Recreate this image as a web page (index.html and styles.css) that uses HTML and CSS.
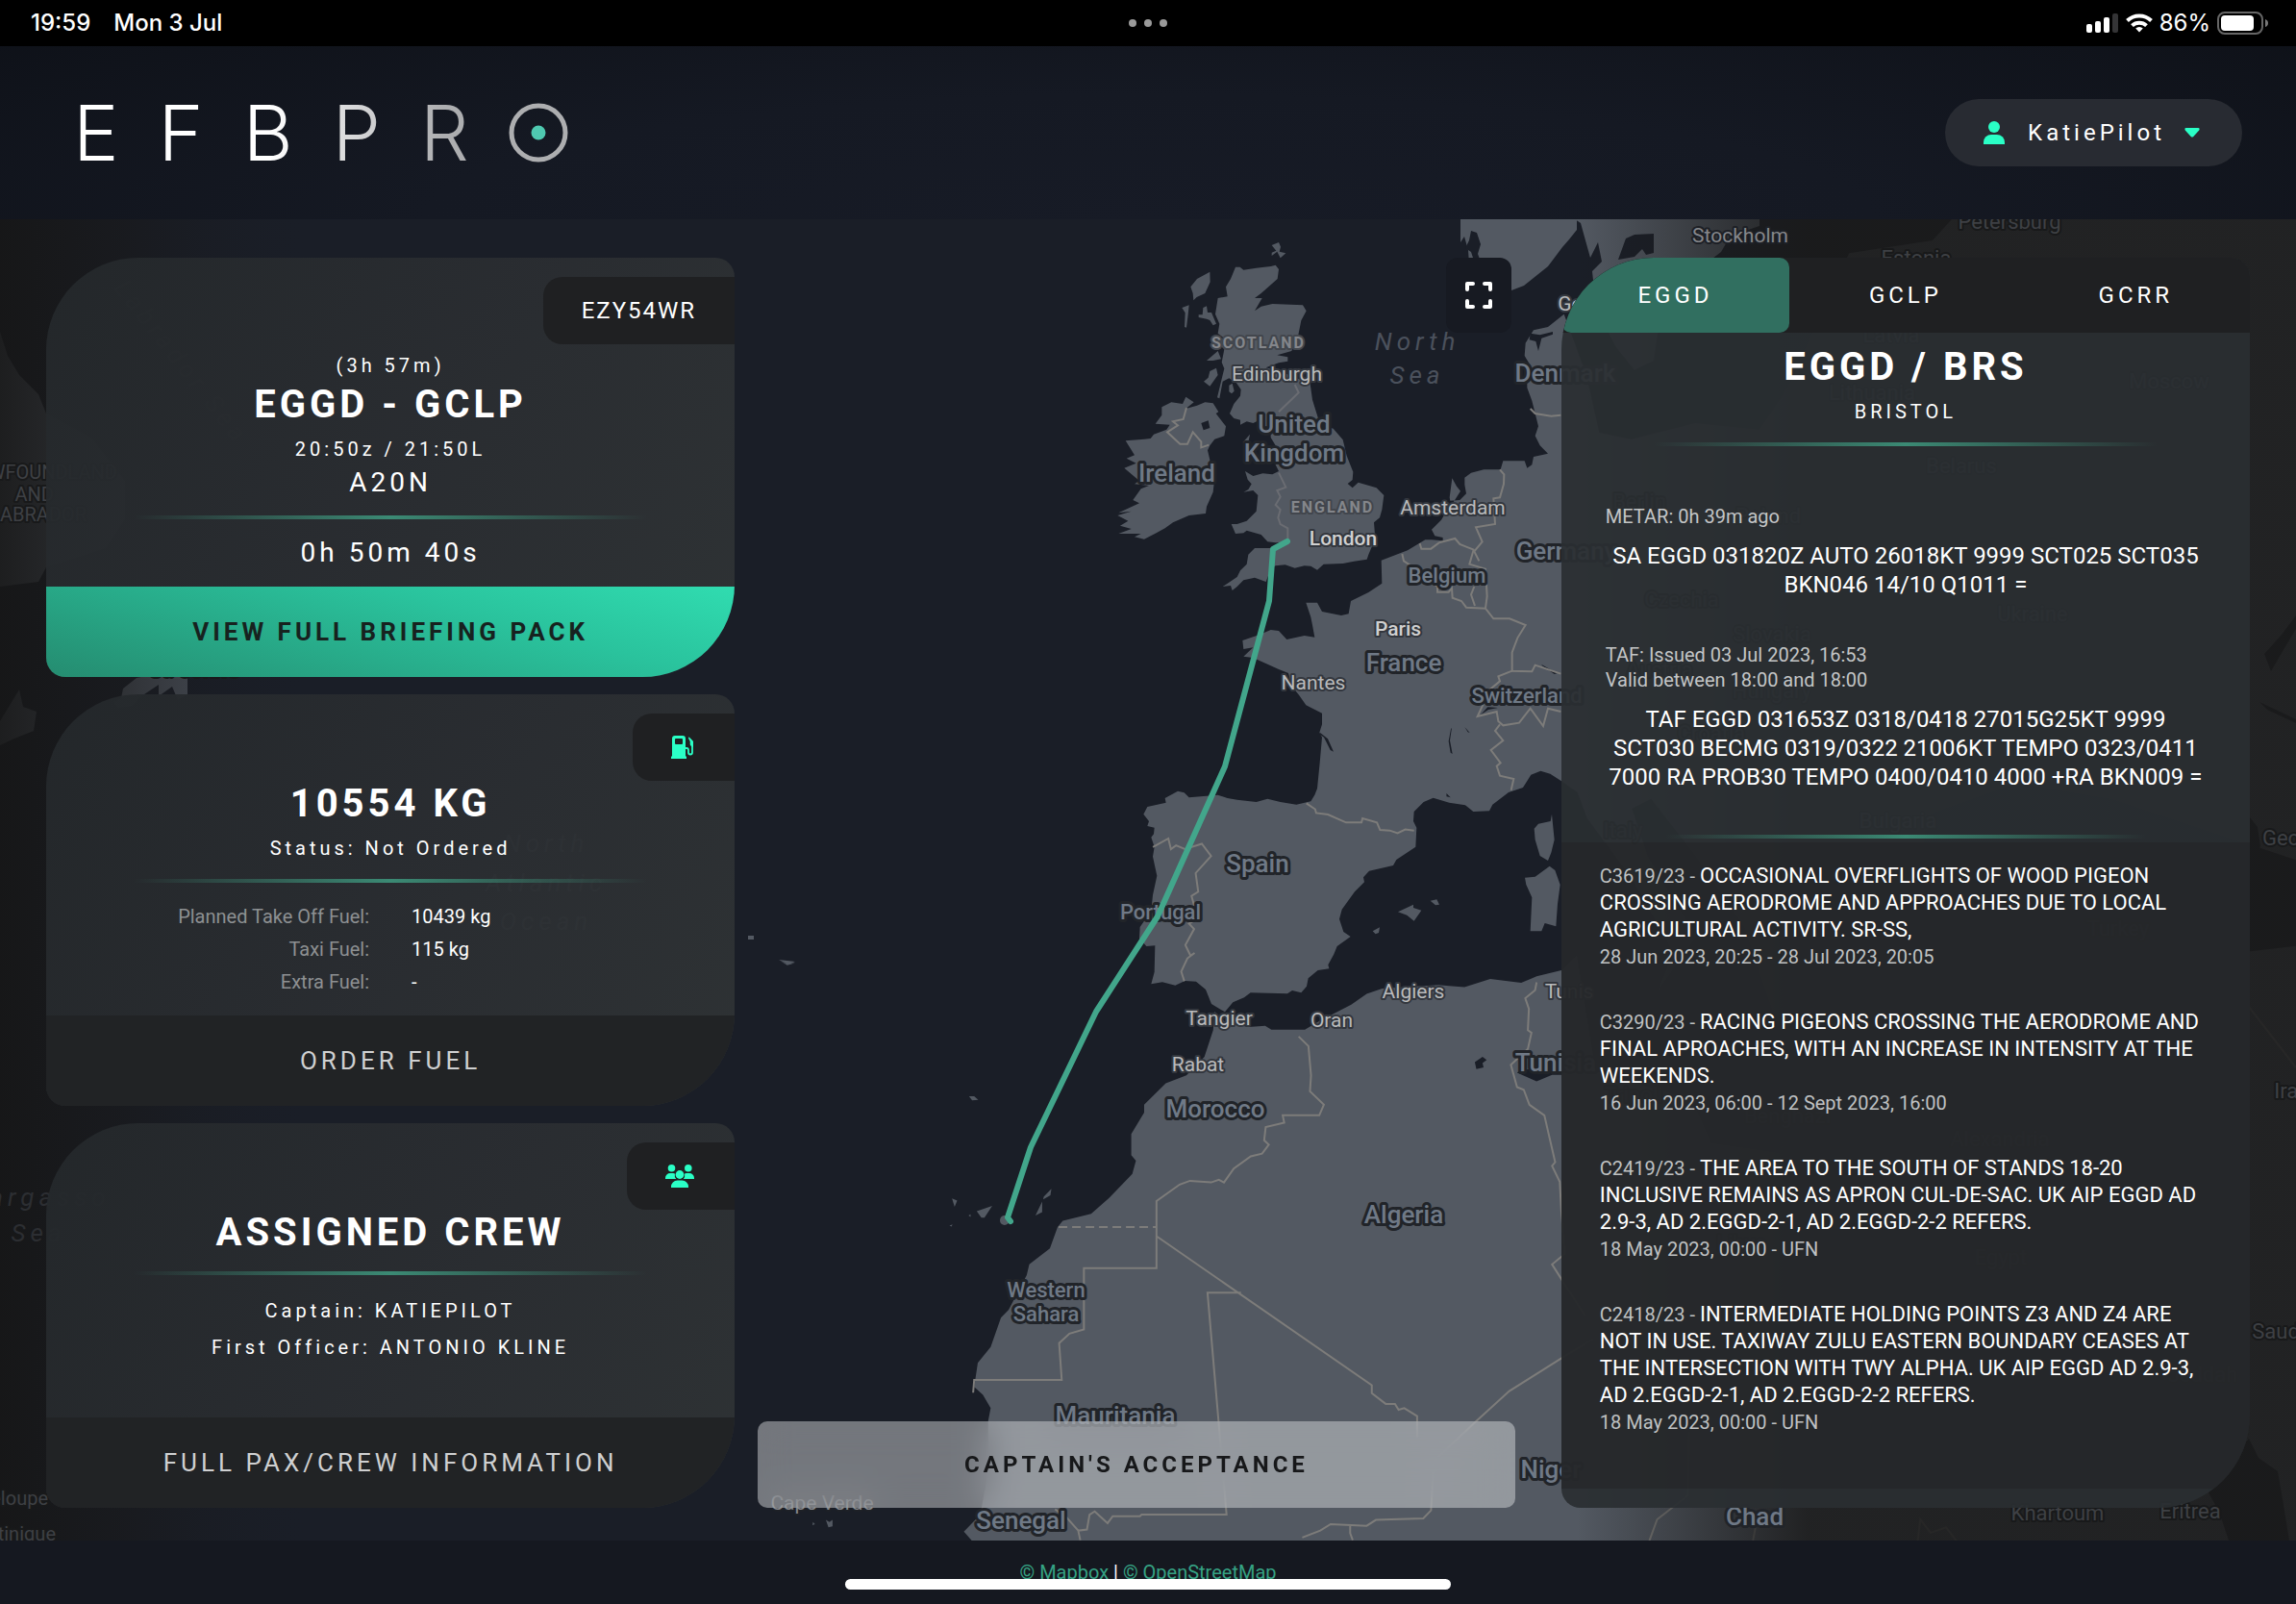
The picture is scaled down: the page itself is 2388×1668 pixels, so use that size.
FILE: index.html
```html
<!DOCTYPE html>
<html lang="en">
<head>
  <meta charset="UTF-8">
  <meta name="viewport" content="width=device-width, initial-scale=1">
  <title>EFBPRO</title>
  <link rel="stylesheet" href="styles.css">
</head>
<body>
  <div class="statusbar">
    <div class="status-left"><span>19:59</span><span>Mon 3 Jul</span></div>
    <div class="status-dots"><i></i><i></i><i></i></div>
    <div class="status-right">
      <svg width="34" height="22" viewBox="0 0 34 22" fill="#fff">
        <rect x="0" y="12" width="6" height="9" rx="2"/><rect x="9" y="9" width="6" height="12" rx="2"/>
        <rect x="18" y="5" width="6" height="16" rx="2"/><rect x="27" y="1" width="6" height="20" rx="2" fill="#343436"/>
      </svg>
      <svg width="28" height="22" viewBox="0 0 28 22" fill="none" stroke="#fff" stroke-width="4">
        <path d="M1.5 8.5a18 18 0 0 1 25 0"/><path d="M6.5 13.6a11 11 0 0 1 15 0"/>
        <path d="M14 20.500l-3.800-3.900a5.500 5.500 0 0 1 7.600 0z" fill="#fff" stroke="none"/>
      </svg>
      <span>86%</span>
      <svg width="54" height="24" viewBox="0 0 54 24">
        <rect x="1" y="1" width="46" height="22" rx="7" fill="none" stroke="#666" stroke-width="2"/>
        <rect x="4" y="4" width="34" height="16" rx="4" fill="#fff"/>
        <path d="M50 8q3 1 3 4t-3 4z" fill="#777"/>
      </svg>
    </div>
  </div>

  <header class="header">
    <a href="#" class="logo" aria-label="EFBPRO">
      <span class="logo-text">EFBPR</span>
      <svg width="62" height="62" viewBox="0 0 62 62">
        <circle cx="31" cy="31" r="28" fill="none" stroke="#adaeb0" stroke-width="5"/>
        <circle cx="31" cy="31" r="7.500" fill="#4fc9b0"/>
      </svg>
    </a>
    <button class="user">
      <svg width="22" height="24" viewBox="0 0 22 24" fill="#2affc6">
        <circle cx="11" cy="6" r="6"/><path d="M0 24v-2a8 8 0 0 1 8-8h6a8 8 0 0 1 8 8v2z"/>
      </svg>
      <span>KatiePilot</span>
      <svg width="16" height="10" viewBox="0 0 16 10" fill="#2affc6"><path d="M1.500 0h13q2 .5.7 2.400L9.300 9q-1.300 1.200-2.600 0L.8 2.400Q-.5.5 1.500 0z"/></svg>
    </button>
  </header>

  <main class="main">
    <svg class="map" viewBox="0 228 2388 1374" preserveAspectRatio="xMidYMid slice">
      <rect class="sea" y="228" width="2388" height="1374"/>

      <!-- scandinavia, canada, azores -->
      <g class="land">
        <path d="M1519 228v24l4-6 4 14 3 45 42-3 13-5 25-20 15-20 7-8 8-10v-11z"/>
        <path d="M1638 228l6 4 10 36 8-16 4 20-10 10 4 38 20 40 20 25 20-10 5-35 20-40 15-15 30-23 10-17 30-10v-7z"/>
        <path d="M0 345l8 25 12 20 20 20 8 20 47 25 35 45v40l-20 30-62 20-8 15-40 5z"/>
        <path d="M20 717l4 18 14 5-3 20-20 8-15 7v-25z"/>
        <path d="M118 730l8-4 2-10 14-11 23-5 30-2v24l-10 6-6-14-14 10 0-12-18 12-10 10-14 2z"/>
        <path d="M778 973h6v4h-6zM758 975l8 3zM810 998l17 2-7 3zM822 1025l6 1z"/>
      </g>
      <path class="sea" d="M1683 270l8-22 9-4 20-1v20l-8 2-4-6-8 8zM1530 240l6 2 4 12-3 10 3 8-6 2-4-12-6-4 4-8z"/>

      <!-- europe -->
      <g transform="translate(1130 230) scale(.333333)">
        <g class="land">
          <path d="M465 143l14 0 11 9 40-6 25-3 20-2 15-4 10 13-4 30-51 45-20 15 23 0-23 40 20-14 35-8 95 4 11 18-16 30-10 50-20 45-45 13 33 6 0 13-28 5-40 15 40 10 50 20 48 20 7 50 17 55 18 25 30 10 30 35 12 50 20 50-2 25-15 12 15 13 18-17 57 17 23 23-6 45-7 25-18 15 4 50-21 50-5 15-40 6-35 7-60 2-20 18-20-12-20-1-30 7-30-10-30 3-15 10-15 40-35-13-35 8-20 20-15 12-5-15-25 3 15-10 30-20 10-20 20-20 5-30 20-20 55 0 40-18-30 1-25-3-20-22-45-13-10 8-25 2-13-30 18 0 30-10 30-30 5-50-15-15-30 5 15-8 10-17-12-14-8-26 25 15 30-8 30 3 20-10-10-20 0-60-15-25 0-35-20 0-15-20-20 10-20-5-20 10 0-15-20-5-13-15 13-30 20-25 2-20-14-20-23-15-20 10-10 53-7-3 12-50 10-40-8-20 8-40-20-20 20-15-20-15 5-30-13-30 8-50 30-5-5-30 15-25z"/>
          <path d="M385 158l1 32-16 35-26 12-10 10-2-22-7-20 20-25zM298 270l22-8-3 30-5 40-6-2 2-44zM350 292l12 0 2-22 11-5 3 20 12 0 15 35-10 5-10-16-10-4-25-5zM375 435l35-30 10 25-25 5zM366 500l14-12 5-20 20-10 5 22-25 35zM445 512l10-6 6 24-8 8-8-6zM578 75l22-9 6 14-4 15 20 5-17 15-10-20-17 13 0-10 14-6zM488 690l22-25-5 25-12 8z"/>
          <path d="M310 548l25 17-25 20 35-10 25-10 25 3 17 27-8 5 31 40-5 30-30 10-15 20-7 15 7 30 0 35 15 20-5 45-20 45-3 22-52 6-50 22-25 18-30 16-35 18-30-7 20-10-70 0 40-15-35-10 25-15-33-17 43-13-40 5 65-30-20-10 25-35 25-10-45-5 15-10-47-40 37-15-30-15 25-10-28-45 58-5 20-2 10-13 40-15 10-15-45-3 20-27 0-25 30-15 35 5z"/>
          <path d="M1490 290l-50 40-45 10-25 40-3 40 18 30-10 20 0 50 15 40 10 40 10 40-10 30 15 30 25 25-45 10-5 25-15 10-8-22-67 0-8 27-52 0-40 10-20 15 0 22 5 28-20 20-30 2-2-10 8-60 14 25 12 15-22 35-23 30-15 25-30 30 10 20 25 5 0 10-35-3-20 0-55 33-82 31 2 72-42 28-55 27-7 40-23 5-60-12-15-28-35 0 15 45 5 25 7 38-32-5-55 12-25-27-25-3-35 15-53 18 3 27 30-5-30 28 30 4 40 18 40 18 30 12 10 40 23 28 22 32 50 25 0 35-8 25 8 15-7 80-8 80-8 20-12 20-45 10-50-8-40-10-35 10-60-7-30-5-30-10-90 8-15-15-20-5-40 22 3 14-58 13-12 23 17 22-5 15 22 5-2 20-8 10 10 30-5 30 13 60-13 60-5 50-35 50-2 35 22 25 27-2-2 82-10 38 35-6 40 10 30-14 35 2 30 25 18 45 42 25 25-30 35-15 20-15 115 3 15-10 28 7 17-20 5-25 30-25 35-5-3-12 18-33 10-25 42-30-22-15-13-40 8-30 40-55 30-30-3-15 18-20 75-17 10-18 60-40 3-60-10-20 2-30 30-30 30-13 50 15 50 8 25 20 50-2 10-20 50-38 45-15 25-40 30-12 30 9 35 23 50 35 30 80 140 190 130 230-50 120 120-170-150-250-50-150 60-30 140 180 150 220 100 300 150 0 0-300 150-50 150-150 20-150 280-100 300 50 300 100 300 100V-6H2700l-60 66-260 40-50 100-130 300-100 150-200-20-200 50-100-20-40-180z"/>
          <path d="M1452 1850l8 80-10 40-10 25-25-15-15-50-3-35 13-15 38-8zM1368 2048l32-3 45-33 17 13 16 45-8 60-5 70-35-10-10 25-35 0 5-105-18-40zM972 2155l48-23 0 10 25 8-23 33-22-18zM1073 2120l20-4 8 16-12 2zM893 2215l22-12-3 17-10 4z"/>
        </g>
        <path class="sea" d="M358 630l22-8 5 23-20 7zM1385 350l30 5 40-10 0 8-35 12-10 40-8-30-20-5zM728 1595l25 20 18 40-10-5-20-40-12-8zM1137 1585l3-5-6 40 8 42-6-4-6-36zM1180 1578l16 18-6-2zM1230 1540l22-24 32 2-30 6zM1420 1383l48 28-8 2-38-26zM1500 1790l20 20z"/>
        <g class="border">
          <path d="M312 582l-10 36-32 7 15 12-33 21 40 37 23 0 17-37 26 30 0 18 24-8"/>
          <path d="M1290 775l13 15-1 30-12 42-20 3 5 80-60 10 20 45-25 30 15 30"/>
          <path d="M985 1038l5 22 30 20 75 60 0 17 35 0 10-12 2 30 28 10 15 20 60 3 25 32 50 0 50 20-25 40-17 45 0 58 62 2 10-20 80 27"/>
          <path d="M1328 1403l-43 17 5 15-30 25-40 85 60-15 5 30 15 13 50-8 35-45 40 55 15-55 40 10M1290 1570l-15 20 25 30-38 30 30 40-12 10 10 30 43 10-8 35"/>
          <path d="M1040 1005l5 17 30 0 25-19 50-13 15 18 43 17-13 45 50 15 5 85-5 38M1210 1140l-10 25 12 35M1385 585l15 15 50 8 30-3"/>
          <path class="faint" d="M650 510l12 25-62 60M600 785l22 45-27 10 10 20-15 25 15 15-7 25 7 20 23 13 0 42"/>
        </g>
      </g>

      <!-- africa and iberian borders -->
      <g transform="translate(800 800) scale(.5357 .5536)">
        <path class="land" d="M862 490l-17 50-35 35-40 15-42 40 0 15-25 40 0 40 9 10-7 25-45 45-35 30-55 13-10 12-15 40-40 30-5 20-35 65-15 15-20 55-25 30-7 45 17 15 15 25-5 25 0 95-15 80-32 32 22 24 2564 0 0-1124-314 36-130 298-224-9-308-36-28 99-131-18-37-81-187-54-37-217-28 27-50 12-30 12-60-7-50 15-30-2-20-2-110 7-30 10-30 20-60 30-30 17-30 0-35 0-12-7-33 2-45-9-20-20z"/>
        <path class="land" d="M355 806l10 4-5 12zM403 830l30-10-15 22-6 0zM517 838l13-26 0 20zM533 803l15-15-2 12-14 8zM350 857l6-2-2 4zM387 838l4-2 0 5zM388 614l10 0 8 7-12 1zM22 360l10 4 18 0-15 4zM110 1410l7 4 6-4 0 12-8 2zM85 1414l4 4-5 2zM68 1425l5 0z"/>
        <circle class="land" cx="457" cy="847" r="9"/>
        <path class="sea" d="M1370 550l15-10 8 6-8 6 2 8-14 3zM1452 570l38 16 30-12 20 0 0-12-80 2zM1315 45l8 8-8-2zM1074 150l8 6zM1106 178l18-1z"/>
        <g class="border">
          <path d="M1028 502l19 18 5 55-2 30 27 25-9 20-71 0 3 14-36 8-3 25 9 8-13 17-22 5-33 23-19 26-10-5-15 5-41-3-20 7-45 31 0 126-141 0 0 115-28 8-20 18 5 69-170 0-2 24"/>
          <path stroke-dasharray="9 5" d="M562 860h190"/>
          <path d="M752 877l418 280 0 15 27 20 18 0 7 11 11-3 25 15 0 40M916 983l-65 0 37 417-165 0-3 3-53 0-10 13-25-22-10 6-5 28-17 2 4 18M600 1430l-23-25-22-15"/>
          <path d="M1600 1070l-55 32-108 66-65 57-82 75-5 92-15 15-92 3-18 11-70-3-20 12-35 13M1128 1421l0 14 5 13"/>
          <path d="M1490 400l-3 15-19 15 7 20-2 40 7 5-7 30-33 30 12 42 13 5 11 28 29 20 21 88-6 7 15 30 3 55 7 80-25 20 25 38 40 60"/>
          <path d="M745 146l30-16 5 20 10-7 17 7 33-10 18 23-30 32 5 35-13 8 12 42-17 10 10 10-17 30 10 20 8-5-14 10-12 25 6 18M1043 64l17 11 2 7 23 3 35 15 30 0 2-8 28 8 6 14 19 1 15 5 15-7 17 2"/>
          <path d="M1709 1449l15-40 60-45 2-120M1910 1449l10-50 38-4M2230 1449l5-40 20 25 30-10 20 25M2964 560l-120-150-100-60"/>
        </g>
      </g>
      <path class="sea" d="M2293 1545l30-30 16-19 10 20 20 14 6 35 6 37h-63l-10-30zM2340 850l8 10 3 20-6 14h-5zM2355 680l18-20 15-20v14l-12 20-14 24zM2350 730l38 18v4l-30-14zM2362 975l26-8v14l-20 2z"/>

      <g class="vignette">
        <rect y="228" width="320" height="1374" fill="url(#fadeL)"/>
        <rect x="1640" y="228" width="748" height="1374" fill="url(#fadeR)"/>
      </g>
      <defs>
        <linearGradient id="fadeL"><stop offset="0" stop-color="#161616" stop-opacity=".88"/><stop offset=".4" stop-color="#181819" stop-opacity=".6"/><stop offset="1" stop-color="#1a1d25" stop-opacity="0"/></linearGradient>
        <linearGradient id="fadeR"><stop offset="0" stop-color="#1a1a1a" stop-opacity="0"/><stop offset=".32" stop-color="#1a1a1a" stop-opacity=".87"/><stop offset="1" stop-color="#1a1a1a" stop-opacity=".87"/></linearGradient>
      </defs>

      <g class="country">
        <text x="1346" y="450">United</text><text x="1346" y="480">Kingdom</text>
        <text x="1224" y="501">Ireland</text><text x="1460" y="698">France</text>
        <text x="1308" y="907">Spain</text><text x="1264" y="1162">Morocco</text>
        <text x="1460" y="1272">Algeria</text><text x="1160" y="1481">Mauritania</text>
        <text x="1062" y="1590">Senegal</text>
        <text class="md" x="1505" y="606">Belgium</text><text class="md" x="1207" y="956">Portugal</text>
        <text class="md" x="1088" y="1349">Western</text><text class="md" x="1088" y="1374">Sahara</text>
        <text class="md" x="1588" y="731">Switzerland</text>
        <text x="1628" y="397">Denmark</text><text x="1629" y="582">Germany</text>
        <text x="1618" y="1114">Tunisia</text><text x="1613" y="1537">Niger</text><text x="1825" y="1586">Chad</text>
      </g>
      <g class="region"><text x="1309" y="362">SCOTLAND</text><text x="1386" y="533">ENGLAND</text></g>
      <g class="city">
        <text x="1328" y="396">Edinburgh</text><text x="1511" y="535">Amsterdam</text>
        <text x="1366" y="717">Nantes</text><text x="1470" y="1038">Algiers</text>
        <text x="1385" y="1068">Oran</text><text x="1268" y="1066">Tangier</text>
        <text x="1246" y="1114">Rabat</text><text x="1632" y="1038">Tunis</text>
        <text class="dim" x="855" y="1570">Cape Verde</text><text x="1675" y="323">Gothenburg</text>
        <text class="dim" x="1810" y="252">Stockholm</text>
        <text class="big" x="1397" y="567">London</text><text class="big" x="1454" y="661">Paris</text>
      </g>
      <g class="ocean">
        <text x="1474" y="364">North</text><text x="1474" y="399">Sea</text>
        <text x="568" y="886">North</text><text x="568" y="927">Atlantic</text><text x="568" y="967">Ocean</text>
        <text class="deep" x="42" y="1254">Sargasso</text><text class="deep" x="40" y="1291">Sea</text>
        <text class="deep" transform="translate(182 382) rotate(52)">Labrador Sea</text>
      </g>
      <g class="muted">
        <g class="end">
          <text x="122" y="498">NEWFOUNDLAND</text><text x="56" y="521">AND</text><text x="90" y="542">LABRADOR</text>
          <text x="50" y="1565">Guadeloupe</text><text x="58" y="1602">Martinique</text>
        </g>
        <text x="202" y="704">St. John's</text>
        <text x="2090" y="238">Petersburg</text><text x="1993" y="276">Estonia</text><text x="1967" y="356">Latvia</text>
        <text x="1947" y="416">Lithuania</text><text x="2256" y="404">Moscow</text><text x="2040" y="492">Belarus</text>
        <text x="1705" y="529">Berlin</text><text x="1839" y="544">Poland</text><text x="1749" y="631">Czechia</text>
        <text x="1843" y="667">Slovakia</text><text x="2114" y="646">Ukraine</text><text x="1726" y="704">Austria</text>
        <text x="1843" y="726">Hungary</text><text x="1780" y="770">Croatia</text><text x="1688" y="871">Italy</text>
        <text x="1974" y="861">Bulgaria</text><text x="2203" y="973">Turkey</text><text x="1699" y="1146">Tripoli</text>
        <text x="1859" y="1168">Benghazi</text><text x="2080" y="1192">Alexandria</text><text x="2081" y="1315">Egypt</text>
        <text x="1811" y="1300">Libya</text><text x="2291" y="1437">Jeddah</text><text x="2391" y="879">Georgia</text>
        <text x="2384" y="1142">Iraq</text><text x="2404" y="1392">Saudi Arabia</text>
        <text x="2140" y="1581">Khartoum</text><text x="2278" y="1579">Eritrea</text>
      </g>
      <path class="route" d="M1339 563l-15 8-4 54-46 172-70 156-64 99-68 141-24 73 3 4"/>
    </svg>

    <section class="cards">
      <article class="card">
        <div class="badge">EZY54WR</div>
        <div class="card-body flight">
          <p class="sub">(3h 57m)</p>
          <h2>EGGD - GCLP</h2>
          <p class="sub">20:50z / 21:50L</p>
          <p class="type">A20N</p>
          <div class="rule"></div>
          <p class="timer">0h 50m 40s</p>
        </div>
        <button class="card-btn primary">VIEW FULL BRIEFING PACK</button>
      </article>

      <article class="card">
        <div class="badge">
          <svg width="24" height="24" viewBox="0 0 24 24" fill="#2affc6">
            <path fill-rule="evenodd" d="M1 21V3a3 3 0 0 1 3-3h8a3 3 0 0 1 3 3v18l1 1v2H0v-2zM5 3q-1 0-1 1v4q0 1 1 1h6q1 0 1-1V4q0-1-1-1z"/>
            <path d="M15 13h1q2 0 2 2v2.500a2 2 0 0 0 4 0V6" fill="none" stroke="#2affc6" stroke-width="1.800"/>
            <path d="M18.500 1.200l4.200 4.300q.3.500.3 1v5.500q-4-1-3.200-5.500-.3-2-1.800-3.600z"/>
          </svg>
        </div>
        <div class="card-body">
          <h2>10554 KG</h2>
          <p class="sub">Status: Not Ordered</p>
          <div class="rule"></div>
          <table class="fuel">
            <tr><th>Planned Take Off Fuel:</th><td>10439 kg</td></tr>
            <tr><th>Taxi Fuel:</th><td>115 kg</td></tr>
            <tr><th>Extra Fuel:</th><td>-</td></tr>
          </table>
        </div>
        <button class="card-btn">ORDER FUEL</button>
      </article>

      <article class="card grow">
        <div class="badge">
          <svg width="30" height="24" viewBox="0 0 30 24" fill="#2affc6">
            <circle cx="6.500" cy="3.800" r="3.800"/><circle cx="23.800" cy="3.800" r="3.800"/><circle cx="15" cy="10.500" r="4.400"/>
            <path d="M0 15v-1a5 5 0 0 1 5-5h3.200q1 0 1.700.4-.6 3.200 1.300 5.600zM30 15v-1a5 5 0 0 0-5-5h-3.200q-1 0-1.700.4.600 3.200-1.300 5.600zM6 24v-1a6.500 6.500 0 0 1 6.500-6.500h5A6.500 6.500 0 0 1 24 23v1z"/>
          </svg>
        </div>
        <div class="card-body">
          <h2>ASSIGNED CREW</h2>
          <div class="rule"></div>
          <p class="crew">Captain: KATIEPILOT</p>
          <p class="crew">First Officer: ANTONIO KLINE</p>
        </div>
        <button class="card-btn">FULL PAX/CREW INFORMATION</button>
      </article>
    </section>

    <section class="center">
      <button class="fullscreen" aria-label="Fullscreen">
        <svg width="28" height="28" viewBox="0 0 28 28" fill="none" stroke="#fff" stroke-width="4" stroke-linecap="round" stroke-linejoin="round">
          <path d="M2 8V2h6M20 2h6v6M26 20v6h-6M8 26H2v-6"/>
        </svg>
      </button>
      <button class="accept">CAPTAIN'S ACCEPTANCE</button>
    </section>

    <section class="airport">
      <nav class="tabs">
        <button class="tab active">EGGD</button>
        <button class="tab">GCLP</button>
        <button class="tab">GCRR</button>
      </nav>
      <div class="weather">
        <h2>EGGD / BRS</h2>
        <p class="sub">BRISTOL</p>
        <div class="rule"></div>
        <div class="report">
          <p class="meta">METAR: 0h 39m ago</p>
          <p class="text">SA EGGD 031820Z AUTO 26018KT 9999 SCT025 SCT035 BKN046 14/10 Q1011 =</p>
        </div>
        <div class="report">
          <p class="meta">TAF: Issued 03 Jul 2023, 16:53<br>Valid between 18:00 and 18:00</p>
          <p class="text">TAF EGGD 031653Z 0318/0418 27015G25KT 9999 SCT030 BECMG 0319/0322 21006KT TEMPO 0323/0411 7000 RA PROB30 TEMPO 0400/0410 4000 +RA BKN009 =</p>
        </div>
        <div class="rule"></div>
      </div>
      <ul class="notams">
        <li><span>C3619/23 - </span>OCCASIONAL OVERFLIGHTS OF WOOD PIGEON CROSSING AERODROME AND APPROACHES DUE TO LOCAL AGRICULTURAL ACTIVITY. SR-SS,
          <time>28 Jun 2023, 20:25 - 28 Jul 2023, 20:05</time></li>
        <li><span>C3290/23 - </span>RACING PIGEONS CROSSING THE AERODROME AND FINAL APROACHES, WITH AN INCREASE IN INTENSITY AT THE WEEKENDS.
          <time>16 Jun 2023, 06:00 - 12 Sept 2023, 16:00</time></li>
        <li><span>C2419/23 - </span>THE AREA TO THE SOUTH OF STANDS 18-20 INCLUSIVE REMAINS AS APRON CUL-DE-SAC. UK AIP EGGD AD 2.9-3, AD 2.EGGD-2-1, AD 2.EGGD-2-2 REFERS.
          <time>18 May 2023, 00:00 - UFN</time></li>
        <li><span>C2418/23 - </span>INTERMEDIATE HOLDING POINTS Z3 AND Z4 ARE NOT IN USE. TAXIWAY ZULU EASTERN BOUNDARY CEASES AT THE INTERSECTION WITH TWY ALPHA. UK AIP EGGD AD 2.9-3, AD 2.EGGD-2-1, AD 2.EGGD-2-2 REFERS.
          <time>18 May 2023, 00:00 - UFN</time></li>
      </ul>
    </section>
  </main>

  <footer class="footer">
    <p><a href="#">© Mapbox</a> | <a href="#">© OpenStreetMap</a></p>
    <div class="home-bar"></div>
  </footer>
</body>
</html>
```
FILE: styles.css
```css
* { box-sizing: border-box; margin: 0; padding: 0; }
body {
  display: flex; flex-direction: column; min-height: 100vh;
  font-family: Roboto, "Liberation Sans", sans-serif; font-size: 20px;
  background: #151820; color: #fff;
}
button { font: inherit; color: inherit; border: none; cursor: pointer; }
svg { display: block; }
a { text-decoration: none; }

/* status bar */
.statusbar {
  display: flex; align-items: center; justify-content: space-between; position: relative;
  height: 48px; padding: 0 28px 0 32px; background: #000;
  font-family: Inter, sans-serif; font-size: 24px; font-weight: 500; line-height: 48px;
}
.status-left { display: flex; gap: 24px; }
.status-dots { position: absolute; left: 0; right: 0; display: flex; justify-content: center; gap: 8px; }
.status-dots i { width: 8px; height: 8px; border-radius: 50%; background: #9a9a9a; }
.status-right { display: flex; align-items: center; gap: 7px; font-weight: 400; }

/* header */
.header {
  display: flex; align-items: center; justify-content: space-between;
  height: 180px; padding: 0 56px 0 76px;
  background: radial-gradient(ellipse 70% 160% at 50% 100%, #171b26 0%, #151923 45%, #0e1118 100%);
}
.logo { display: flex; align-items: center; }
.logo-text {
  font-family: Inter, sans-serif; font-weight: 300; font-size: 80px; line-height: 90px; letter-spacing: 41px;
  background: linear-gradient(90deg, #fff 45%, #adaeb0 85%); -webkit-background-clip: text; background-clip: text; color: transparent;
}
.user {
  display: flex; align-items: center; gap: 24px; height: 70px; padding: 0 44px 0 40px;
  border-radius: 35px; background: #282b32; font-size: 24px; letter-spacing: 4px;
}
.user span { margin-right: -4px; }

/* map */
.main {
  position: relative; flex: 1;
  display: grid; grid-template-columns: 30fr 34fr 30fr; column-gap: 24px;
  padding: 40px 48px 34px; overflow: hidden;
}
.map { position: absolute; left: 0; top: 0; width: 100%; height: 100%; }
.sea { fill: #1a1e27; }
.land { fill: #535962; }
.border { fill: none; }
.border path { vector-effect: non-scaling-stroke; stroke: #7d7c7a; stroke-width: 2px; }
.border .faint { stroke: #6a6c72; }
.route { fill: none; stroke: #42a68b; stroke-width: 6; stroke-linecap: round; stroke-linejoin: round; }
.map text { text-anchor: middle; paint-order: stroke; stroke-linejoin: round; }
.country { font-size: 26px; font-weight: 500; fill: #6f7986; stroke: #212429; stroke-width: 6px; }
.country .md { font-size: 22px; }
.region { font-size: 16px; font-weight: 700; letter-spacing: 2px; fill: #84868b; stroke: #42464d; stroke-width: 4px; }
.city { font-size: 21px; fill: #b9babb; stroke: #33373e; stroke-width: 4px; }
.city .big { font-weight: 500; fill: #d0d0d0; }
.city .dim { fill: #85878b; stroke: #1d2026; }
.ocean { font-size: 26px; font-style: italic; letter-spacing: 5px; fill: #4b515c; }
.ocean .deep { fill: #2c2e32; }
.muted { font-size: 22px; fill: #3e4044; stroke: #18191a; stroke-width: 4px; }
.muted .end { font-size: 20px; }
.muted .end text { text-anchor: end; }

/* cards */
.cards, .center, .airport { position: relative; }
.cards { display: flex; flex-direction: column; gap: 18px; }
.card {
  position: relative; display: flex; flex-direction: column; overflow: hidden;
  border-radius: 96px 20px 96px 20px; text-align: center;
  background: linear-gradient(120deg, rgba(36, 40, 43, .95), rgba(42, 45, 49, .95) 50%, rgba(47, 51, 53, .95));
}
.card.grow { flex: 1; }
.card-body { flex: 1; padding: 87px 40px 18px; }
.card-body.flight { padding-top: 98px; }
.badge {
  position: absolute; top: 20px; right: 0; display: flex; align-items: center;
  height: 70px; padding: 0 40px; border-radius: 20px 0 0 20px;
  background: #1f2022; font-size: 24px; letter-spacing: 2px;
}
.badge svg { margin-right: 2px; }
h2 { font-size: 40px; line-height: 54px; font-weight: 700; letter-spacing: 4px; }
.sub { font-size: 20px; line-height: 28px; letter-spacing: 4px; }
h2 + .sub { margin-top: 5px; }
.type { margin-top: 5px; font-size: 28px; line-height: 32px; letter-spacing: 4px; }
.timer { font-size: 28px; line-height: 34px; letter-spacing: 4px; }
.rule {
  width: 84%; height: 4px; margin: 18px auto;
  background: linear-gradient(90deg, transparent, #3b8a74 50%, transparent);
}
h2 + .rule { margin-top: 13px; }
.fuel { width: 100%; border-collapse: collapse; line-height: 34px; }
.fuel th { width: 50%; padding-right: 22px; text-align: right; font-weight: 400; color: #8d9092; }
.fuel td { padding-left: 22px; text-align: left; }
.crew { line-height: 38px; letter-spacing: 4px; }
.card-btn {
  height: 94px; font-size: 26px; letter-spacing: 4px;
  background: #212325; color: #cfd0d1;
}
.card-btn.primary {
  background: linear-gradient(15deg, #258c70, #2ac39d 65%, #30dcb0);
  color: #17221f; font-weight: 700;
}

/* center column */
.center { display: flex; flex-direction: column; justify-content: space-between; margin-right: 24px; }
.fullscreen {
  align-self: flex-end; display: flex; align-items: center; justify-content: center;
  width: 68px; height: 78px; margin-right: 4px; border-radius: 12px; background: #171a22;
}
.accept {
  height: 90px; border-radius: 10px; background: rgba(226, 229, 230, .45); backdrop-filter: blur(18px);
  color: #17181a; font-size: 24px; font-weight: 700; letter-spacing: 4px;
}

/* airport panel */
.airport {
  display: flex; flex-direction: column; overflow: hidden;
  border-radius: 96px 20px 96px 20px; background: rgba(42, 46, 49, .93);
}
.tabs { display: flex; gap: 2px; background: #1f2022; }
.tab { flex: 1; height: 78px; border-radius: 10px; background: none; font-size: 24px; letter-spacing: 4px; }
.tab.active { background: #316f60; }
.weather { padding: 9px 46px 0; text-align: center; }
.weather .rule:last-child { width: 80%; margin: 45px auto 4px; }
.report { margin-top: 45px; }
.rule + .report { margin-top: 60px; }
.meta { text-align: left; font-size: 20px; line-height: 26px; color: #c3c5c6; }
.text { margin-top: 13px; font-size: 24px; line-height: 30px; }
.notams {
  flex: 1; margin-bottom: 20px; padding: 21px 36px 0 40px; list-style: none;
  background: rgba(33, 34, 36, .5); font-size: 22px; line-height: 28px;
}
.notams li { margin-bottom: 40px; }
.notams span, .notams time { font-size: 20px; color: #bfc1c2; }
.notams time { display: block; }

/* footer */
.footer { position: relative; height: 66px; padding-top: 18px; text-align: center; line-height: 30px; }
.footer a { color: #35a384; }
.home-bar { position: absolute; left: 0; right: 0; top: 40px; width: 630px; height: 11px; margin: 0 auto; border-radius: 6px; background: #fff; }
```
